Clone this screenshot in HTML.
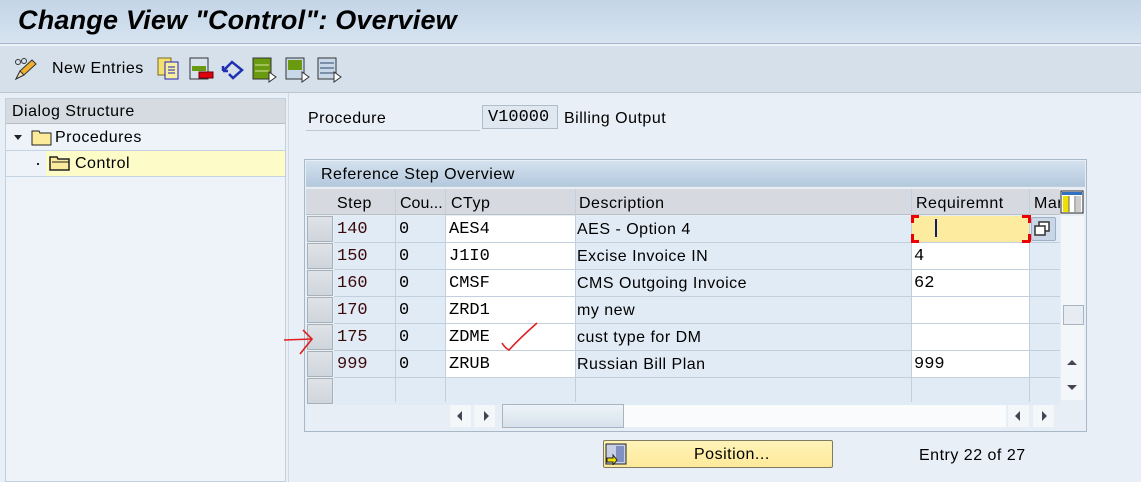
<!DOCTYPE html>
<html><head><meta charset="utf-8"><style>
*{margin:0;padding:0;box-sizing:border-box}
body{width:1141px;height:482px;overflow:hidden;background:#e9eff6;font-family:"Liberation Sans",sans-serif;font-size:16px;letter-spacing:0.5px;color:#000;position:relative}
.a{position:absolute;white-space:nowrap}
.mono{font-family:"Liberation Mono",monospace;font-size:17px;letter-spacing:0}
</style></head><body>
<div class="a" style="left:0;top:0;width:1141px;height:44px;background:linear-gradient(#c4d5e7,#d6e3f0);border-bottom:1px solid #a9b9ca"></div>
<div class="a" style="left:18px;top:5px;font-size:27px;font-weight:bold;font-style:italic;letter-spacing:0.2px">Change View "Control": Overview</div>
<div class="a" style="left:0;top:45px;width:1141px;height:48px;background:#d5e0eb;border-top:1px solid #eef3f8;border-bottom:1px solid #b8c6d4"></div>
<svg class="a" style="left:12px;top:57px" width="26" height="26"><path d="M4 22 L8 14 L20 3 L24 7 L12 18 Z" fill="#f0b030" stroke="#333"/><path d="M4 22 L8 14 L12 18Z" fill="#f7e0b0" stroke="#333"/><circle cx="6" cy="5" r="2.5" fill="none" stroke="#333"/><circle cx="12" cy="4" r="2.5" fill="none" stroke="#333"/></svg>
<div class="a" style="left:52px;top:60px;font-size:16px">New Entries</div>
<svg class="a" style="left:157px;top:57px" width="24" height="24"><rect x="1" y="1" width="13" height="17" fill="#f4e070" stroke="#7a6a20"/><rect x="8" y="5" width="13" height="17" fill="#f8f0a0" stroke="#2020c0"/><path d="M11 10h7M11 13h7M11 16h7" stroke="#2020c0"/></svg>
<svg class="a" style="left:189px;top:57px" width="26" height="26"><rect x="1" y="1" width="18" height="21" fill="#d8e2ec" stroke="#333"/><rect x="3" y="9" width="14" height="5" fill="#6a9a10"/><rect x="10" y="15" width="14" height="6" fill="#e00010" stroke="#600"/></svg>
<svg class="a" style="left:220px;top:57px" width="26" height="26"><path d="M3 14 L12 5 L22 13 L13 21 L9 17 M3 14 L3 9 M3 14 L8 14" fill="none" stroke="#2030b0" stroke-width="2.5"/></svg>
<svg class="a" style="left:252px;top:57px" width="26" height="26"><rect x="1" y="1" width="18" height="21" fill="#6a9a10" stroke="#333"/><path d="M3 8h14M3 14h14" stroke="#d8e8a0"/><path d="M17 15l7 5-7 5z" fill="#fff" stroke="#333"/></svg>
<svg class="a" style="left:285px;top:57px" width="26" height="26"><rect x="1" y="1" width="18" height="21" fill="#c8d8e8" stroke="#333"/><rect x="3" y="3" width="14" height="10" fill="#6a9a10"/><path d="M17 15l7 5-7 5z" fill="#fff" stroke="#333"/></svg>
<svg class="a" style="left:317px;top:57px" width="26" height="26"><rect x="1" y="1" width="18" height="21" fill="#c8d8e8" stroke="#333"/><path d="M3 6h14M3 11h14M3 16h14" stroke="#7a90a8" stroke-width="2"/><path d="M17 15l7 5-7 5z" fill="#fff" stroke="#333"/></svg>

<div class="a" style="left:5px;top:98px;width:281px;height:384px;background:#eef3f9;border:1px solid #c3cfdb"></div>
<div class="a" style="left:6px;top:99px;width:279px;height:25px;background:#d6dbe1;border-bottom:1px solid #b5bec8"></div>
<div class="a" style="left:12px;top:103px">Dialog Structure</div>
<div class="a" style="left:6px;top:150px;width:279px;height:1px;background:#c5d2df"></div>
<div class="a" style="left:6px;top:176px;width:279px;height:1px;background:#c5d2df"></div>
<div class="a" style="left:46px;top:151px;width:239px;height:25px;background:#fdfbc8"></div>
<div class="a" style="left:14px;top:135px;width:0;height:0;border-left:4px solid transparent;border-right:4px solid transparent;border-top:5px solid #222"></div>
<svg class="a" style="left:31px;top:128px" width="22" height="18"><path d="M1 3h7l1 2h11v12H1z" fill="#fbeb9a" stroke="#222"/></svg>
<div class="a" style="left:55px;top:129px">Procedures</div>
<div class="a" style="left:37px;top:163px;width:2px;height:2px;background:#222"></div>
<svg class="a" style="left:48px;top:154px" width="24" height="18"><path d="M2 3h7l1 2h11v11H2z" fill="#fbeb9a" stroke="#222" stroke-width="1.5"/><path d="M4 8h17" stroke="#222"/></svg>
<div class="a" style="left:75px;top:155px">Control</div>
<div class="a" style="left:288px;top:93px;width:1px;height:389px;background:#d0dae5"></div>

<div class="a" style="left:308px;top:110px">Procedure</div>
<div class="a" style="left:306px;top:130px;width:174px;height:1px;background:#c0c8d0"></div>
<div class="a mono" style="left:482px;top:105px;width:76px;height:24px;background:#dfe8f1;border:1px solid #b0bcc8;padding:2px 0 0 5px">V10000</div>
<div class="a" style="left:564px;top:110px">Billing Output</div>

<div class="a" style="left:304px;top:159px;width:783px;height:273px;border:1px solid #a9b8c8;background:#e8eef5"></div>
<div class="a" style="left:306px;top:161px;width:779px;height:26px;background:linear-gradient(#d4e1ee,#b4c9de);border-bottom:1px solid #c0ccd8"></div>
<div class="a" style="left:321px;top:166px">Reference Step Overview</div>
<div class="a" style="left:306px;top:189px;width:754px;height:26px;background:#d6dae0;border-bottom:1px solid #b8c0c8"></div>
<div id="rows"></div>
<div class="a" style="left:337px;top:195px">Step</div>
<div class="a" style="left:400px;top:195px;letter-spacing:0">Cou...</div>
<div class="a" style="left:451px;top:195px">CTyp</div>
<div class="a" style="left:579px;top:195px">Description</div>
<div class="a" style="left:916px;top:195px">Requiremnt</div>
<div class="a" style="left:1034px;top:195px;width:26px;overflow:hidden">Mar</div>
<svg class="a" style="left:1060px;top:190px" width="24" height="24"><rect x="1" y="1" width="22" height="22" fill="#fff" stroke="#222"/><rect x="2" y="2" width="20" height="3" fill="#3070c0"/><rect x="3" y="6" width="6" height="16" fill="#f0e000"/><path d="M9 6v16M15 6v16" stroke="#666"/><rect x="16" y="6" width="5" height="16" fill="#ccc"/></svg>

<div class="a" style="left:1061px;top:216px;width:23px;height:184px;background:#f4f7fa"></div>
<div class="a" style="left:1063px;top:305px;width:21px;height:20px;background:#e6ecf2;border:1px solid #a8b4c0"></div>
<div class="a" style="left:1067px;top:360px;border-left:5px solid transparent;border-right:5px solid transparent;border-bottom:5px solid #445"></div>
<div class="a" style="left:1067px;top:385px;border-left:5px solid transparent;border-right:5px solid transparent;border-top:5px solid #445"></div>

<div class="a" style="left:450px;top:405px;width:21px;height:22px;background:#f4f7fa"></div>
<div class="a" style="left:474px;top:405px;width:21px;height:22px;background:#f4f7fa"></div>
<div class="a" style="left:457px;top:411px;border-top:5px solid transparent;border-bottom:5px solid transparent;border-right:5px solid #445"></div>
<div class="a" style="left:484px;top:411px;border-top:5px solid transparent;border-bottom:5px solid transparent;border-left:5px solid #445"></div>
<div class="a" style="left:502px;top:404px;width:122px;height:24px;background:linear-gradient(#eef3f8,#d8e2ec);border:1px solid #a8b4c0"></div>
<div class="a" style="left:624px;top:405px;width:382px;height:22px;background:#fafbfc"></div>
<div class="a" style="left:1008px;top:405px;width:21px;height:22px;background:#f4f7fa"></div>
<div class="a" style="left:1033px;top:405px;width:21px;height:22px;background:#f4f7fa"></div>
<div class="a" style="left:1015px;top:411px;border-top:5px solid transparent;border-bottom:5px solid transparent;border-right:5px solid #445"></div>
<div class="a" style="left:1042px;top:411px;border-top:5px solid transparent;border-bottom:5px solid transparent;border-left:5px solid #445"></div>

<div class="a" style="left:603px;top:440px;width:230px;height:28px;background:linear-gradient(#fff3b8,#fde99a);border:1px solid #807a60;border-radius:2px"></div>
<svg class="a" style="left:605px;top:443px" width="22" height="22"><rect x="1" y="1" width="20" height="20" fill="#c8d0e8" stroke="#222"/><rect x="11" y="3" width="8" height="16" fill="#8090c0"/><path d="M2 15h6v-3l4 5-4 5v-3H2z" fill="#f0e000" stroke="#222"/></svg>
<div class="a" style="left:694px;top:446px">Position...</div>
<div class="a" style="left:919px;top:447px">Entry 22 of 27</div>

<svg class="a" style="left:280px;top:318px" width="260" height="40"><path d="M4 22 L32 21 M23 12 L32 21 L20 36" fill="none" stroke="#e02020" stroke-width="1.6"/><path d="M222 25 Q225 30 229 32 Q240 20 257 5" fill="none" stroke="#e02020" stroke-width="1.6"/></svg>

<script>
var d=[["140","AES4","AES - Option 4",""],["150","J1I0","Excise Invoice IN","4"],["160","CMSF","CMS Outgoing Invoice","62"],["170","ZRD1","my new",""],["175","ZDME","cust type for DM",""],["999","ZRUB","Russian Bill Plan","999"],["","","",""]];
var h="";
for(var i=0;i<7;i++){var y=216+i*27,r=d[i],last=i==6;
h+='<div class="a" style="left:307px;top:'+y+'px;width:26px;height:26px;background:linear-gradient(#dfe3e8,#cfd5dc);border:1px solid #a8b0b8"></div>';
h+='<div class="a" style="left:334px;top:'+y+'px;width:726px;height:27px;background:#e1ebf5;border-bottom:1px solid '+(last?'transparent':'#c2cfdc')+'"></div>';
if(!last){h+='<div class="a" style="left:446px;top:'+y+'px;width:129px;height:26px;background:#fff"></div>';
h+='<div class="a" style="left:912px;top:'+y+'px;width:118px;height:26px;background:'+(i==0?'#fdeca0':'#fff')+'"></div>';}
h+='<div class="a mono" style="left:337px;top:'+(y+4)+'px;color:#3a0a0a">'+r[0]+'</div>';
if(!last)h+='<div class="a mono" style="left:399px;top:'+(y+4)+'px">0</div>';
h+='<div class="a mono" style="left:449px;top:'+(y+4)+'px">'+r[1]+'</div>';
h+='<div class="a" style="left:577px;top:'+(y+5)+'px">'+r[2]+'</div>';
h+='<div class="a mono" style="left:914px;top:'+(y+4)+'px">'+r[3]+'</div>';}
[395,445,575,911,1029].forEach(function(x){h+='<div class="a" style="left:'+x+'px;top:189px;width:1px;height:213px;background:#c2cfdc"></div>'});
h+='<div class="a" style="left:911px;top:215px;width:8px;height:3px;background:#e00"></div><div class="a" style="left:911px;top:215px;width:3px;height:27px;background:linear-gradient(#e00 8px,transparent 8px,transparent 19px,#e00 19px)"></div>';
h+='<div class="a" style="left:1022px;top:215px;width:8px;height:3px;background:#e00"></div><div class="a" style="left:1028px;top:215px;width:3px;height:27px;background:linear-gradient(#e00 8px,transparent 8px,transparent 19px,#e00 19px)"></div>';
h+='<div class="a" style="left:911px;top:240px;width:8px;height:3px;background:#e00"></div><div class="a" style="left:1022px;top:240px;width:8px;height:3px;background:#e00"></div>';
h+='<div class="a" style="left:935px;top:219px;width:2px;height:18px;background:#102060"></div>';
h+='<div class="a" style="left:1031px;top:217px;width:25px;height:24px;background:#c8d6e6;border:1px solid #a0b0c4;border-radius:2px"></div>';
h+='<svg class="a" style="left:1033px;top:220px" width="18" height="18"><rect x="6" y="2" width="10" height="9" fill="#fff" stroke="#333" stroke-width="1.5"/><rect x="2" y="6" width="10" height="9" fill="#fff" stroke="#333" stroke-width="1.5"/></svg>';
document.getElementById("rows").innerHTML=h;
</script>
</body></html>
